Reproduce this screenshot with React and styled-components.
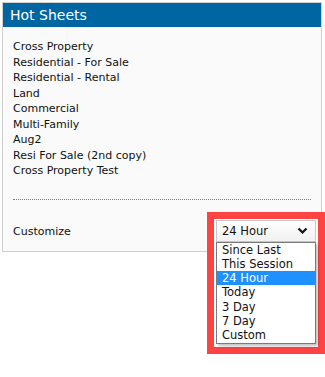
import styled, { createGlobalStyle } from "styled-components";

const Global = createGlobalStyle`
    html, body, #root {
        height: 100%;
    }
    body {
        margin: 0;
        background: #ffffff;
        font-family: "DejaVu Sans", Verdana, sans-serif;
    }
`

const Card = styled.div`
    margin: 2px 3px 0 2px;
    border: 1px solid #cfcfcf;
    background-color: #fafafa;
    width: 318px;
`

const Header = styled.div`
    background-color: #0066a2;
    color: #ffffff;
    font-size: 14px;
    height: 24px;
    line-height: 24px;
    padding-left: 7px;
`

const Body = styled.div`
    padding: 12px 10px 0 10px;
`

const List = styled.ul`
    list-style: none;
    margin: 0;
    padding: 0;
`

const Item = styled.li`
    font-size: 11px;
    line-height: 15.5px;
    color: #111111;
`

const Divider = styled.div`
    margin-top: 20px;
    border-top: 1px dotted #777777;
`

const CustomRow = styled.div`
    position: relative;
    height: 51px;
    display: flex;
    align-items: center;
    padding-top: 12px;
    box-sizing: border-box;
    font-size: 11px;
    color: #111111;
`

const Highlight = styled.div`
    position: absolute;
    left: 194px;
    top: 12px;
    width: 100px;
    border: 7px solid #fe4343;
    background-color: #ffffff;
    padding: 0 2px 3px 2px;
`

const SelectBox = styled.div`
    margin-top: 1px;
    height: 20px;
    border: 1px solid #c8c8c8;
    background: linear-gradient(#ffffff, #f1f1f1);
    display: flex;
    align-items: center;
    justify-content: space-between;
    padding: 0 7px 0 5px;
    font-size: 11.5px;
    color: #111111;
`

const Options = styled.div`
    border: 1px solid #7a7a7a;
    background: #ffffff;
    box-shadow: 2px 2px 3px rgba(0, 0, 0, 0.25);
`

const Option = styled.div`
    font-size: 11.5px;
    line-height: 14.3px;
    padding-left: 5px;
    color: ${p => (p.selected ? "#ffffff" : "#111111")};
    background-color: ${p => (p.selected ? "#1e90ff" : "transparent")};
`

const sheets = [
    "Cross Property",
    "Residential - For Sale",
    "Residential - Rental",
    "Land",
    "Commercial",
    "Multi-Family",
    "Aug2",
    "Resi For Sale (2nd copy)",
    "Cross Property Test",
]

const periods = ["Since Last", "This Session", "24 Hour", "Today", "3 Day", "7 Day", "Custom"]

function App() {
    return (
        <>
            <Global />
            <Card>
                <Header>Hot Sheets</Header>
                <Body>
                    <List>
                        {sheets.map((s, i) => (
                            <Item key={i}>{s}</Item>
                        ))}
                    </List>
                    <Divider />
                    <CustomRow>
                        Customize
                        <Highlight>
                            <SelectBox>
                                <span>24 Hour</span>
                                <svg width="11" height="8" viewBox="0 0 11 8">
                                    <path d="M1.5 1.5 L5.5 5.5 L9.5 1.5" fill="none" stroke="#111" strokeWidth="2.2" />
                                </svg>
                            </SelectBox>
                            <Options>
                                {periods.map((p) => (
                                    <Option key={p} selected={p === "24 Hour"}>{p}</Option>
                                ))}
                            </Options>
                        </Highlight>
                    </CustomRow>
                </Body>
            </Card>
        </>
    )
}

export default App
